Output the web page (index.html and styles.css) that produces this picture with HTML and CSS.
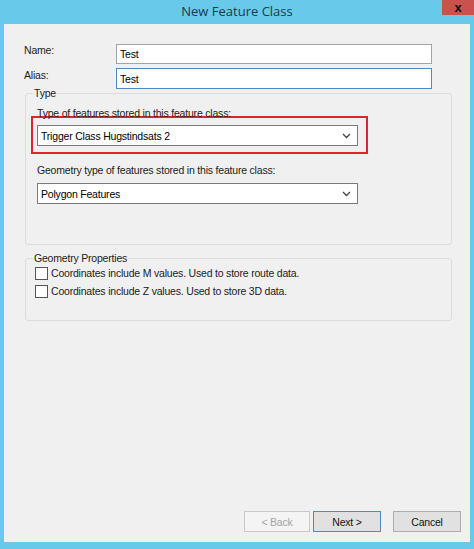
FILE: index.html
```html
<!DOCTYPE html>
<html lang="en">
<head>
    <meta charset="UTF-8">
    <meta name="viewport" content="width=device-width, initial-scale=1.0">
    <title>New Feature Class</title>
    <link rel="stylesheet" href="styles.css">
</head>
<body>
    <div class="window">
        <div class="titlebar">
            <span class="title">New Feature Class</span>
            <button class="close-btn" type="button">x</button>
        </div>
        <div class="dialog">
            <div class="form-row">
                <label for="fc-name">Name:</label>
                <input type="text" id="fc-name" value="Test">
            </div>
            <div class="form-row">
                <label for="fc-alias">Alias:</label>
                <input type="text" id="fc-alias" class="focused" value="Test">
            </div>

            <fieldset class="group group-type">
                <legend>Type</legend>
                <div class="field-label">Type of features stored in this feature class:</div>
                <div class="highlight">
                    <div class="dropdown">
                        <span>Trigger Class Hugstindsats 2</span>
                        <svg width="9" height="6" viewBox="0 0 9 6"><polyline points="1,1 4.5,4.5 8,1" fill="none" stroke="#444" stroke-width="1.3"/></svg>
                    </div>
                </div>
                <div class="field-label second">Geometry type of features stored in this feature class:</div>
                <div class="dropdown">
                    <span>Polygon Features</span>
                    <svg width="9" height="6" viewBox="0 0 9 6"><polyline points="1,1 4.5,4.5 8,1" fill="none" stroke="#444" stroke-width="1.3"/></svg>
                </div>
            </fieldset>

            <fieldset class="group group-geometry">
                <legend>Geometry Properties</legend>
                <label class="check"><span class="box"></span>Coordinates include M values. Used to store route data.</label>
                <label class="check"><span class="box"></span>Coordinates include Z values. Used to store 3D data.</label>
            </fieldset>

            <div class="buttons">
                <button type="button" class="btn" disabled>&lt; Back</button>
                <button type="button" class="btn default">Next &gt;</button>
                <button type="button" class="btn cancel">Cancel</button>
            </div>
        </div>
    </div>
</body>
</html>
```

FILE: styles.css
```css
html, body {
    margin: 0;
    padding: 0;
    height: 100%;
}
body {
    background-color: #68c9eb;
    font-family: "Liberation Sans", Arial, sans-serif;
    font-size: 10.5px;
    letter-spacing: -0.2px;
    color: #000;
}
.window {
    display: flex;
    flex-direction: column;
    height: 549px;
}
.titlebar {
    height: 24px;
    display: flex;
    justify-content: center;
    align-items: center;
    position: relative;
}
.title {
    font-family: "Open Sans", "Noto Sans", sans-serif;
    font-size: 13px;
    letter-spacing: 0;
    color: #1b3b4c;
    margin-top: -3px;
}
.close-btn {
    position: absolute;
    top: 0;
    right: 0;
    width: 32px;
    height: 15px;
    border: none;
    padding: 0;
    background-color: #c9524c;
    color: #111;
    font-family: "Liberation Sans", Arial, sans-serif;
    font-size: 13px;
    font-weight: bold;
    line-height: 12px;
}
.dialog {
    flex: 1;
    margin: 0 4px 7px 4px;
    background-color: #f0f0f0;
    padding: 20px 0 0 0;
    display: flex;
    flex-direction: column;
}
.form-row {
    display: flex;
    align-items: center;
    padding-left: 20px;
    margin-bottom: 4px;
}
.form-row label {
    width: 92px;
    color: #222;
    margin-top: -8px;
}
.form-row input {
    width: 316px;
    height: 20px;
    box-sizing: border-box;
    border: 1px solid #a4a4a4;
    background: #fff;
    font-family: inherit;
    font-size: 10.5px;
    letter-spacing: -0.2px;
    padding: 0 3px;
    margin: 0;
    outline: none;
}
.form-row input.focused {
    border-color: #4f8ac3;
    height: 21px;
}
.group {
    margin: 0 0 0 21px;
    width: 427px;
    box-sizing: border-box;
    border: 1px solid #dcdcdc;
    border-radius: 3px;
    padding: 0 0 0 5px;
}
.group legend {
    padding: 0 1px;
    margin-left: 2px;
    color: #222;
}
.group-type {
    height: 158px;
    margin-top: -6px;
}
.group-geometry {
    height: 69px;
    margin-top: 7px;
}
.field-label {
    color: #222;
    margin: 8px 0 0 6px;
    height: 12px;
}
.field-label.second {
    margin-top: 10px;
    margin-bottom: 7px;
}
.highlight {
    border: 2px solid #e0252a;
    width: 337px;
    box-sizing: border-box;
    padding: 7px 0 6px 4px;
    margin-top: -3px;
}
.dropdown {
    width: 321px;
    height: 21px;
    box-sizing: border-box;
    border: 1px solid #7a7a7a;
    background: #fff;
    display: flex;
    align-items: center;
    justify-content: space-between;
    padding: 0 6px 0 3px;
    margin-left: 6px;
}
.highlight .dropdown {
    margin-left: 0;
}
.check {
    display: flex;
    align-items: center;
    color: #222;
    margin-left: 4px;
    height: 18px;
}
.box {
    width: 11px;
    height: 11px;
    border: 1px solid #555;
    background: #fff;
    margin-right: 3px;
}
.buttons {
    margin-top: auto;
    display: flex;
    justify-content: flex-end;
    padding: 0 9px 10px 0;
}
.btn {
    width: 66px;
    height: 21px;
    box-sizing: border-box;
    font-family: inherit;
    font-size: 10.5px;
    letter-spacing: -0.2px;
    border: 1px solid #adadad;
    background-color: #e1e1e1;
    color: #111;
    padding: 0;
}
.btn[disabled] {
    background-color: #f4f4f4;
    border-color: #c8c8c8;
    color: #a3a3a3;
}
.btn.default {
    border-color: #4f8ac3;
    margin-left: 3px;
    width: 68px;
}
.btn.cancel {
    margin-left: 12px;
    width: 68px;
}
```
